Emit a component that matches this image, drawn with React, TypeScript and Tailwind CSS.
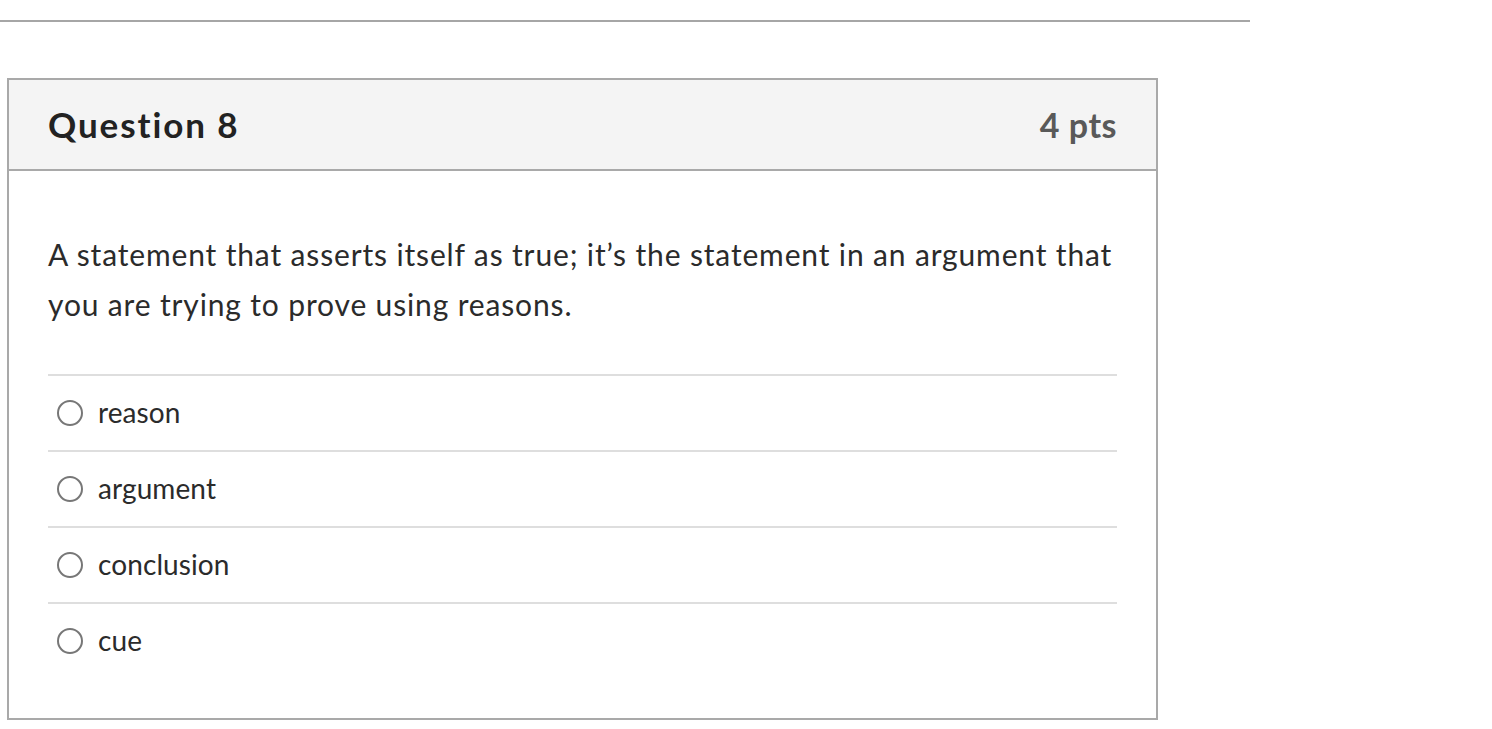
const options = ["reason", "argument", "conclusion", "cue"];

function Radio() {
  return (
    <span className="w-[26px] h-[26px] rounded-full border-2 border-[#777777] bg-white shrink-0" />
  );
}

export default function App() {
  return (
    <div className="w-[1492px] h-[729px] bg-white font-['Lato',sans-serif] text-[#2b2b2b]">
      <div className="pt-[20px]">
        <div className="w-[1250px] h-[2px] bg-[#a6a6a6]" />
      </div>

      <div className="mt-[56px] ml-[7px] w-[1151px] border-2 border-[#a9a9a9]">
        <div className="h-[91px] px-[39px] flex items-center justify-between bg-[#f4f4f4] border-b-2 border-[#a9a9a9]">
          <h2 className="text-[35px] font-bold tracking-[1.9px] text-[#222222]">Question 8</h2>
          <span className="text-[34px] font-bold tracking-[0.5px] text-[#595959]">4 pts</span>
        </div>

        <div className="px-[39px] pt-[58px] pb-[40px]">
          <p className="text-[30px] leading-[50px] tracking-[0.85px] text-[#2b2b2b]">
            A statement that asserts itself as true; it’s the statement in an argument that you are trying to prove using reasons.
          </p>

          <div className="mt-[45px]">
            {options.map((opt) => (
              <label
                key={opt}
                className="h-[76px] flex items-center gap-[15px] pl-[9px] border-t-2 border-[#dedede] text-[28px] tracking-[0.1px] text-[#2b2b2b]"
              >
                <Radio />
                <span className="-mt-[2px]">{opt}</span>
              </label>
            ))}
          </div>
        </div>
      </div>
    </div>
  );
}
